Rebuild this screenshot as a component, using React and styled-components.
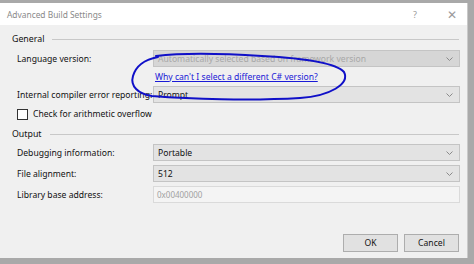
import React from 'react';
import styled, { createGlobalStyle } from 'styled-components';

const Global = createGlobalStyle`
  html, body {
    margin: 0;
    padding: 0;
    background: #ffffff;
  }
  body {
    font-family: "Noto Sans", "Open Sans", sans-serif;
    font-size: 8.6px;
    color: #111111;
  }
`;

const Screen = styled.div`
  width: 474px;
  height: 264px;
  position: relative;
  overflow: hidden;
  background: #a9a9a9;
  padding-top: 3px;
  box-sizing: border-box;
`;

const Dialog = styled.div`
  width: 468px;
  height: 255px;
  background: #f0f0f0;
  border-right: 1px solid #c9c9c9;
  display: flex;
  flex-direction: column;
  box-sizing: border-box;
`;

const TitleBar = styled.div`
  height: 22px;
  background: #ffffff;
  display: flex;
  align-items: center;
  gap: 17px;
  padding: 0 5px 0 7px;
  color: #8a8a8a;
  font-size: 8.4px;
`;

const Title = styled.span`
  flex: 1;
`;

const TitleButton = styled.span`
  width: 20px;
  text-align: center;
  color: #9a9a9a;
  font-size: ${p => (p.$big ? '12px' : '9px')};
`;

const Body = styled.div`
  flex: 1;
  padding: 6px 8px 0 12px;
  display: flex;
  flex-direction: column;
`;

const GroupHeader = styled.div`
  display: flex;
  align-items: center;
  gap: 8px;
  height: 16px;
  font-size: 8.8px;
  margin-top: ${p => p.$top || 0}px;

  &::after {
    content: '';
    flex: 1;
    height: 1px;
    background: #c8c8c8;
  }
`;

const Row = styled.div`
  display: grid;
  grid-template-columns: 136px 307px;
  align-items: center;
  padding-left: 5px;
  margin-top: ${p => p.$top || 4}px;
`;

const Label = styled.span`
  white-space: nowrap;
`;

const Select = styled.div`
  height: 17px;
  box-sizing: border-box;
  border: 1px solid #c4c4c4;
  background: ${p => (p.$disabled ? '#d6d6d6' : '#e3e3e3')};
  color: ${p => (p.$disabled ? '#a8a8a8' : '#111111')};
  display: flex;
  align-items: center;
  padding-left: 4px;
  white-space: nowrap;
`;

const SelectText = styled.span`
  flex: 1;
`;

const Caret = styled.svg`
  width: 7px;
  height: 4px;
  margin-right: 6px;
`;

const TextBox = styled.div`
  height: 17px;
  box-sizing: border-box;
  border: 1px solid #dadada;
  background: #f4f4f4;
  color: #a0a0a0;
  display: flex;
  align-items: center;
  padding-left: 3px;
  font-size: 8px;
`;

const LinkRow = styled.div`
  padding-left: 143px;
  margin-top: 1px;
  height: 17px;
  display: flex;
  align-items: center;
`;

const HelpLink = styled.a`
  color: #1a1ad6;
  text-decoration: underline;
`;

const CheckRow = styled.label`
  display: flex;
  align-items: center;
  gap: 5px;
  padding-left: 5px;
  margin-top: 3px;
  height: 16px;
`;

const Box = styled.span`
  width: 11px;
  height: 11px;
  border: 1px solid #333;
  background: #fff;
  box-sizing: border-box;
`;

const Footer = styled.div`
  margin-top: auto;
  display: flex;
  justify-content: flex-end;
  gap: 6px;
  padding: 0 0 6px;
`;

const Button = styled.button`
  width: 55px;
  height: 18px;
  border: 1px solid #adadad;
  background: #e1e1e1;
  font-family: inherit;
  font-size: 8.6px;
  color: #111111;
  padding: 0;
`;

const Scribble = styled.svg`
  position: absolute;
  left: 0;
  top: 0;
  width: 474px;
  height: 264px;
  pointer-events: none;
`;

const Chevron = () => (
  <Caret viewBox="0 0 7 4">
    <path d="M0.5 0.5 L3.5 3.5 L6.5 0.5" fill="none" stroke="#8a8a8a" strokeWidth="1" />
  </Caret>
);

const Dropdown = ({ value, disabled }) => (
  <Select $disabled={disabled}>
    <SelectText>{value}</SelectText>
    <Chevron />
  </Select>
);

export default function App() {
  return (
    <>
      <Global />
      <Screen>
        <Dialog>
          <TitleBar>
            <Title>Advanced Build Settings</Title>
            <TitleButton>?</TitleButton>
            <TitleButton $big>✕</TitleButton>
          </TitleBar>
          <Body>
            <GroupHeader>General</GroupHeader>
            <Row $top={3}>
              <Label>Language version:</Label>
              <Dropdown disabled value="Automatically selected based on framework version" />
            </Row>
            <LinkRow>
              <HelpLink href="#">Why can't I select a different C# version?</HelpLink>
            </LinkRow>
            <Row $top={1}>
              <Label>Internal compiler error reporting:</Label>
              <Dropdown value="Prompt" />
            </Row>
            <CheckRow>
              <Box />
              <span>Check for arithmetic overflow</span>
            </CheckRow>
            <GroupHeader $top={4}>Output</GroupHeader>
            <Row $top={2}>
              <Label>Debugging information:</Label>
              <Dropdown value="Portable" />
            </Row>
            <Row>
              <Label>File alignment:</Label>
              <Dropdown value="512" />
            </Row>
            <Row>
              <Label>Library base address:</Label>
              <TextBox>0x00400000</TextBox>
            </Row>
            <Footer>
              <Button>OK</Button>
              <Button>Cancel</Button>
            </Footer>
          </Body>
        </Dialog>
        <Scribble viewBox="0 0 474 264">
          <path
            d="M156 56 C190 52 230 54 262 56 C300 58 335 62 344 72 C350 84 330 96 300 98 C250 101 190 99 152 96 C138 94 130 86 133 76 C136 66 143 60 158 57"
            fill="none"
            stroke="#1010c8"
            strokeWidth="2"
            strokeLinecap="round"
          />
        </Scribble>
      </Screen>
    </>
  );
}
